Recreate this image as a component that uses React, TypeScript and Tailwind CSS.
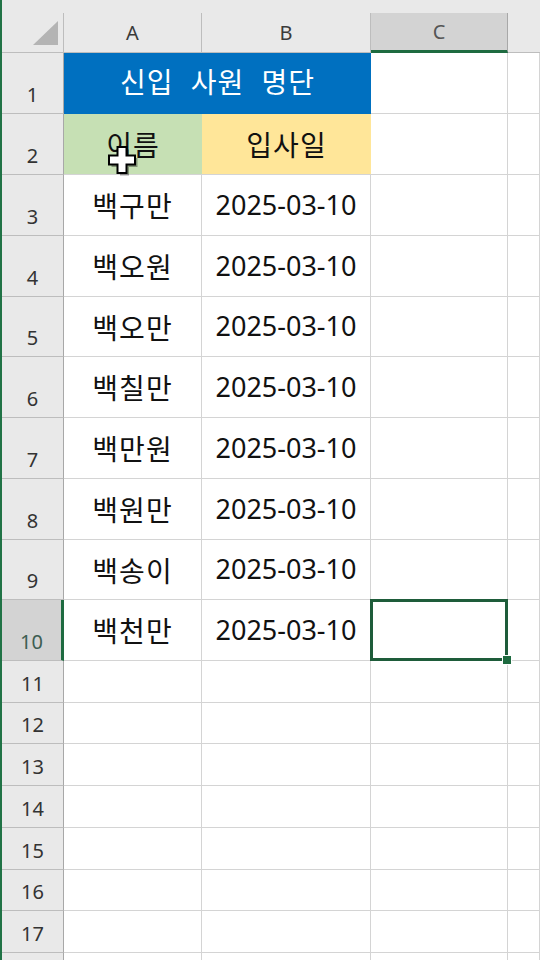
import React from 'react';

const font = { fontFamily: '"Noto Sans", "Noto Sans CJK KR", sans-serif' };
const kr = { fontFamily: '"Noto Sans CJK KR", sans-serif' };

const names = ['백구만', '백오원', '백오만', '백칠만', '백만원', '백원만', '백송이', '백천만'];
const tallHeights = ['h-[61px]', 'h-[61px]', 'h-[61px]', 'h-[61px]', 'h-[60px]', 'h-[61px]', 'h-[61px]', 'h-[61px]', 'h-[60px]', 'h-[61px]'];
const shortHeights = ['h-[42px]', 'h-[41px]', 'h-[42px]', 'h-[42px]', 'h-[42px]', 'h-[41px]', 'h-[42px]'];

const gridCols = 'grid grid-cols-[62px_138px_169px_137px_1fr]';
const cell = 'border-r border-b border-[#d4d4d4] bg-white';

const RowHead = ({ n, selected }: { n?: number; selected?: boolean }) => (
  <div
    className={`flex items-end justify-center pb-[6px] text-[20px] leading-[24px] border-b border-[#bdbdbd] ${
      selected
        ? 'bg-[#d3d3d3] text-[#3d5e52] border-r-[3px] border-r-[#1e6b40]'
        : 'bg-[#e9e9e9] text-[#333] border-r border-r-[#a8a8a8]'
    }`}
  >
    {n}
  </div>
);

const Cursor = () => (
  <svg className="absolute left-[106px] top-[146px]" width="32" height="32" viewBox="0 0 32 32">
    <path d="M9.5 1h9v8.5h8.5v9h-8.5v8.5h-9v-8.5H1v-9h8.5z" fill="#000" opacity="0.35" transform="translate(2.5 2.5)" />
    <path d="M9.5 1h9v8.5h8.5v9h-8.5v8.5h-9v-8.5H1v-9h8.5z" fill="#fff" stroke="#000" strokeWidth="2" />
  </svg>
);

export default function App() {
  return (
    <div className="relative w-[540px] h-[960px] overflow-hidden bg-white border-l-2 border-[#217346]" style={font}>
      {/* top strip */}
      <div className="h-[13px] bg-[#e9e9e9]" />

      {/* column headers */}
      <div className={`${gridCols} h-[40px] text-[20px] text-[#3a3a3a]`}>
        <div className="relative bg-[#e9e9e9] border-r border-b border-[#bdbdbd]">
          <svg className="absolute left-[29px] top-[7px]" width="28" height="26" viewBox="0 0 28 26">
            <path d="M27 1V25H2z" fill="#b4b4b4" />
          </svg>
        </div>
        <div className="flex items-center justify-center bg-[#e9e9e9] border-r border-b border-[#bdbdbd]">A</div>
        <div className="flex items-center justify-center bg-[#e9e9e9] border-r border-b border-[#bdbdbd]">B</div>
        <div className="flex items-center justify-center bg-[#d3d3d3] text-[#555] border-r border-r-[#a8a8a8] border-b-[3px] border-b-[#1e6b40]">
          C
        </div>
        <div className="bg-[#e9e9e9] border-b border-[#bdbdbd]" />
      </div>

      {/* row 1 */}
      <div className={`${gridCols} ${tallHeights[0]}`}>
        <RowHead n={1} />
        <div className="col-span-2 flex items-center justify-center bg-[#0070c0] text-white text-[28px] tracking-[1px] [word-spacing:10px] pb-[6px]" style={kr}>
          신입 사원 명단
        </div>
        <div className={cell} />
        <div className={cell} />
      </div>

      {/* row 2 */}
      <div className={`${gridCols} ${tallHeights[1]}`}>
        <RowHead n={2} />
        <div className="flex items-center justify-center bg-[#c6e0b4] border-b border-[#d4d4d4] text-[28px] tracking-[1px] text-[#111]" style={kr}>
          이름
        </div>
        <div className="flex items-center justify-center bg-[#ffe699] border-b border-[#d4d4d4] text-[28px] tracking-[1px] text-[#111]" style={kr}>
          입사일
        </div>
        <div className={cell} />
        <div className={cell} />
      </div>

      {/* data rows */}
      {names.map((name, i) => {
        const last = i === names.length - 1;
        return (
          <div key={name} className={`${gridCols} ${tallHeights[i + 2]}`}>
            <RowHead n={i + 3} selected={last} />
            <div className={`${cell} flex items-center justify-center text-[28px] tracking-[1px] text-[#111]`} style={kr}>
              {name}
            </div>
            <div className={`${cell} flex items-center justify-center text-[27px] text-[#111]`}>
              2025-03-10
            </div>
            <div className={last ? 'relative bg-white border-[3px] border-[#1e5c3a] -mt-px -ml-px' : cell}>
              {last && (
                <span className="absolute -right-[7px] -bottom-[7px] w-[10px] h-[10px] bg-[#1e6b40] border border-white" />
              )}
            </div>
            <div className={cell} />
          </div>
        );
      })}

      {/* empty rows */}
      {shortHeights.map((h, i) => (
        <div key={i} className={`${gridCols} ${h}`}>
          <RowHead n={i + 11} />
          <div className={cell} />
          <div className={cell} />
          <div className={cell} />
          <div className={cell} />
        </div>
      ))}

      {/* partial row 18, number hidden below the edge */}
      <div className={`${gridCols} h-[42px]`}>
        <RowHead />
        <div className={cell} />
        <div className={cell} />
        <div className={cell} />
        <div className={cell} />
      </div>

      <Cursor />
    </div>
  );
}
